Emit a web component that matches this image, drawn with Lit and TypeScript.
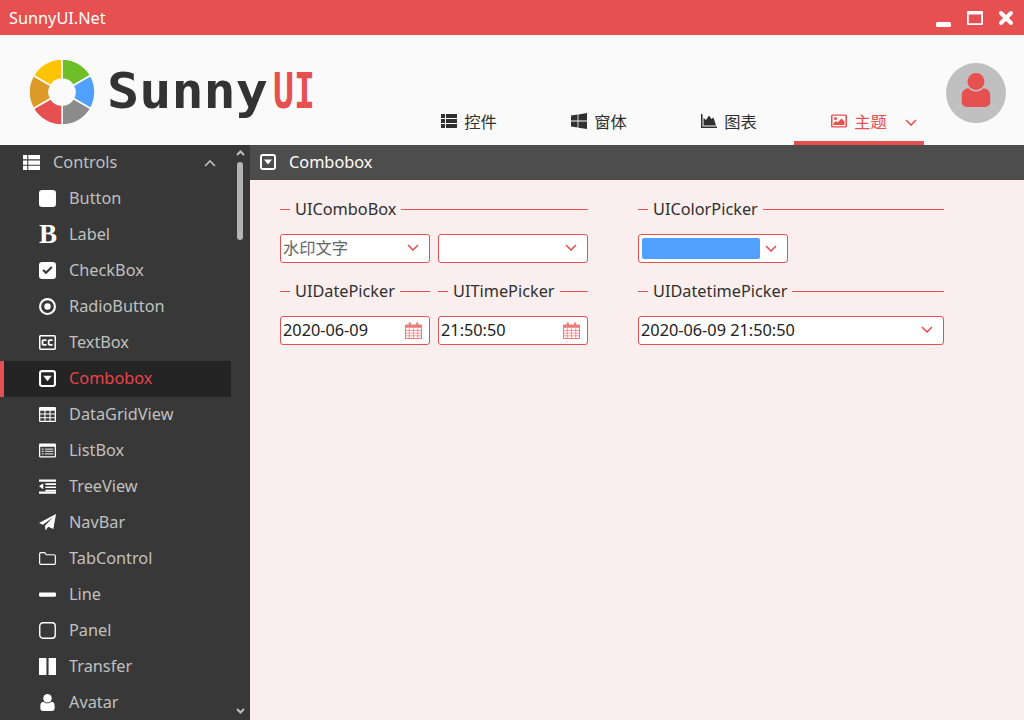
import { LitElement, html, css, svg } from 'lit';
import { customElement, state } from 'lit/decorators.js';

// icons, all on a 16x16 box, painted with currentColor
const icons: Record<string, unknown> = {
  list: svg`<path d="M0 1h4v4H0zM5 1h11v4H5zM0 6h4v4H0zM5 6h11v4H5zM0 11h4v4H0zM5 11h11v4H5z"/>`,
  square: svg`<rect x="0" y="0" width="16" height="16" rx="3"/>`,
  check: svg`<path fill-rule="evenodd" d="M3 0h10a3 3 0 0 1 3 3v10a3 3 0 0 1-3 3H3a3 3 0 0 1-3-3V3a3 3 0 0 1 3-3zM3.200 8.200l3.400 3.400 6.200-6.200-1.400-1.400-4.800 4.800-2-2z"/>`,
  radio: svg`<path fill-rule="evenodd" d="M8 0a8 8 0 1 1 0 16A8 8 0 0 1 8 0zm0 2a6 6 0 1 0 0 12A6 6 0 0 0 8 2z"/><circle cx="8" cy="8" r="3"/>`,
  cc: svg`<rect x=".7" y="1.700" width="14.600" height="12.600" rx=".8" fill="none" stroke="currentColor" stroke-width="1.400"/><path d="M7 5.800H4.200L3.300 6.600V9.400L4.200 10.200H7M12.800 5.800H10L9.100 6.600V9.400L10 10.200H12.800" fill="none" stroke="currentColor" stroke-width="1.700"/>`,
  combo: svg`<path fill-rule="evenodd" d="M3 0h10a3 3 0 0 1 3 3v10a3 3 0 0 1-3 3H3a3 3 0 0 1-3-3V3a3 3 0 0 1 3-3zm-.2 2a.8.8 0 0 0-.8.8v10.400a.8.800 0 0 0 .8.800h10.400a.8.800 0 0 0 .8-.8V2.800a.8.800 0 0 0-.8-.8z"/><path d="M4 5.500h8L8 10.500z"/>`,
  grid: svg`<path fill-rule="evenodd" d="M1 1h14a1 1 0 0 1 1 1v12a1 1 0 0 1-1 1H1a1 1 0 0 1-1-1V2a1 1 0 0 1 1-1zm.2 3.500v2.600h3.900V4.500zm4.900 0v2.600h3.800V4.500zm4.800 0v2.600h3.900V4.500zM1.200 8.100v2.500h3.900V8.100zm4.900 0v2.500h3.800V8.100zm4.800 0v2.500h3.900V8.100zM1.200 11.600v2.200h3.900v-2.200zm4.900 0v2.200h3.800v-2.200zm4.800 0v2.200h3.900v-2.200z"/>`,
  listbox: svg`<path fill-rule="evenodd" d="M1 1.500h14a1 1 0 0 1 1 1v11a1 1 0 0 1-1 1H1a1 1 0 0 1-1-1v-11a1 1 0 0 1 1-1zm.2 3v8.800h13.600V4.500z"/><path d="M2.500 6h2v1.200h-2zM5.500 6h8v1.200h-8zM2.500 8.300h2v1.200h-2zM5.500 8.300h8v1.200h-8zM2.500 10.600h2v1.200h-2zM5.500 10.600h8v1.200h-8z" opacity=".75"/>`,
  tree: svg`<path d="M0 1.500h16v2H0zM6 5h10v1.500H6zM6 8h10v1.500H6zM6 11h10v1.500H6zM0 12.800h16v2H0zM4 5v5.500L0 7.800z"/>`,
  plane: svg`<path d="M16 0 13.500 14 8.700 12 6.200 15.500 5.600 11.300 13 3 3.800 10 0 8.500z"/>`,
  folder: svg`<path fill="none" stroke="currentColor" stroke-width="1.100" d="M1.800 2.500h3.600l1.500 2h7.300a1.200 1.200 0 0 1 1.200 1.200v6.600a1.200 1.200 0 0 1-1.200 1.200H1.800a1.200 1.200 0 0 1-1.200-1.200V3.700a1.200 1.200 0 0 1 1.200-1.200z"/>`,
  line: svg`<rect x="0" y="6" width="16" height="4" rx="1"/>`,
  panel: svg`<rect x="0.700" y="0.700" width="14.600" height="14.600" rx="3" fill="none" stroke="currentColor" stroke-width="1.300"/>`,
  transfer: svg`<path d="M0 0h7v16H0zM9 0h7v16H9z"/>`,
  user: svg`<circle cx="8" cy="4" r="4"/><path d="M4.500 7.200C5.500 8.200 6.700 8.700 8 8.700s2.500-.5 3.500-1.500c1.800 0 3.200 1.400 3.200 3.300v3.200c0 1.300-1 2.300-2.300 2.300H3.600c-1.300 0-2.300-1-2.300-2.300v-3.200c0-1.900 1.400-3.300 3.200-3.300z"/>`,
  windows: svg`<path d="M0 2.400 6.600 1.500V7.600H0zM7.400 1.400 16 0V7.600H7.400zM0 8.400H6.600V14.500L0 13.600zM7.400 8.400H16V16L7.400 14.700z"/>`,
  area: svg`<path d="M0 1h1.500v12.500H16V15H0z"/><path d="M2.500 12.500V5L5 7 8 2.500 10.500 6 12.500 4.500 15 12.500z"/>`,
  image: svg`<path fill-rule="evenodd" d="M1.500 1.500h13A1.500 1.500 0 0 1 16 3v10a1.500 1.500 0 0 1-1.500 1.500h-13A1.500 1.500 0 0 1 0 13V3a1.500 1.500 0 0 1 1.500-1.500zm0 1.300V13.200h13V2.800z"/><circle cx="4.500" cy="5.500" r="1.500"/><path d="M2.500 12v-1.800L5 8l1.500 1.500L10.500 5.500 13.500 8.500V12z"/>`,
};

const chevron = (up = false) => html`<svg class="chev" viewBox="0 0 12 7"><path d=${up ? 'M1 6 6 1 11 6' : 'M1 1 6 6 11 1'} /></svg>`;

const icon = (name: string) => html`<svg class="ico" viewBox="0 0 16 16">${icons[name]}</svg>`;

const calendar = html`<svg class="cal" viewBox="0 0 16 16">
  <path d="M.5 3h15v12.500H.5z" fill="none" stroke="currentColor" stroke-width="1" />
  <path d="M.5 2.500h15v3H.5zM3.500 .5h2v3.500h-2zM10.500 .5h2v3.500h-2z" />
  <path d="M.5 8h15M.5 10.500h15M.5 13h15M4 5.500v10M8 5.500v10M12 5.500v10" fill="none" stroke="currentColor" stroke-width=".7" />
</svg>`;

// six colour wheel segments of the logo, clockwise from 12 o'clock
const wheelColors = ['#6ebe28', '#50a0ff', '#8c8c8c', '#e65050', '#dc9b28', '#ffc300'];

function segment(i: number) {
  const R = 33;
  const r = 13;
  const a0 = ((i * 60 - 90) * Math.PI) / 180;
  const a1 = (((i + 1) * 60 - 90) * Math.PI) / 180;
  const p = (rad: number, a: number) => `${(33 + rad * Math.cos(a)).toFixed(2)} ${(33 + rad * Math.sin(a)).toFixed(2)}`;
  return `M${p(r, a0)}L${p(R, a0)}A${R} ${R} 0 0 1 ${p(R, a1)}L${p(r, a1)}A${r} ${r} 0 0 0 ${p(r, a0)}Z`;
}

const menu = [
  ['square', 'Button'],
  ['', 'Label'],
  ['check', 'CheckBox'],
  ['radio', 'RadioButton'],
  ['cc', 'TextBox'],
  ['combo', 'Combobox'],
  ['grid', 'DataGridView'],
  ['listbox', 'ListBox'],
  ['tree', 'TreeView'],
  ['plane', 'NavBar'],
  ['folder', 'TabControl'],
  ['line', 'Line'],
  ['panel', 'Panel'],
  ['transfer', 'Transfer'],
  ['user', 'Avatar'],
];

const tabs = [
  ['list', '控件'],
  ['windows', '窗体'],
  ['area', '图表'],
  ['image', '主题'],
];

@customElement('app-root')
export class AppRoot extends LitElement {
  @state() private activeTab = '主题';
  @state() private activeItem = 'Combobox';

  static styles = css`
    :host {
      display: block;
      width: 1024px;
      height: 720px;
      overflow: hidden;
      font-family: 'Noto Sans', 'Noto Sans CJK SC', sans-serif;
      font-size: 16.3px;
      color: #303030;
      --red: #e65050;
    }
    svg.ico {
      width: 16px;
      height: 16px;
      fill: currentColor;
      flex: none;
    }
    svg.chev {
      width: 12px;
      height: 7px;
      fill: none;
      stroke: var(--red);
      stroke-width: 1.6;
      flex: none;
    }
    .title {
      height: 35px;
      background: var(--red);
      color: #fff;
      display: flex;
      align-items: center;
      justify-content: space-between;
      padding: 0 10px 0 9px;
    }
    .win {
      display: flex;
      align-items: center;
      gap: 15px;
    }
    .win svg {
      width: 16px;
      height: 16px;
      display: block;
    }
    .win .min {
      margin-top: 4px;
    }
    .head {
      height: 110px;
      background: #fafafa;
      display: flex;
    }
    .logo {
      margin: 24px 0 0 29px;
      width: 320px;
      height: 66px;
      display: flex;
    }
    .logo text {
      font-family: 'DejaVu Sans Mono', monospace;
      font-weight: 700;
      font-size: 50px;
    }
    .tabs {
      display: flex;
      margin-left: 55px;
      align-self: flex-end;
    }
    .tab {
      width: 130px;
      height: 44px;
      box-sizing: border-box;
      display: flex;
      align-items: center;
      justify-content: center;
      gap: 7px;
      padding-bottom: 5px;
      position: relative;
    }
    .tab.on {
      color: var(--red);
      border-bottom: 4px solid var(--red);
      padding-bottom: 1px;
    }
    .tab .chev {
      position: absolute;
      right: 7px;
      top: 18px;
    }
    .avatar {
      width: 60px;
      height: 60px;
      border-radius: 50%;
      background: #c0c0c0;
      margin: 28px 0 0 22px;
      padding-bottom: 7px;
      box-sizing: border-box;
      display: flex;
      align-items: center;
      justify-content: center;
      color: var(--red);
    }
    .avatar svg.ico {
      width: 34px;
      height: 34px;
    }
    .body {
      display: flex;
      height: 575px;
    }
    .side {
      width: 250px;
      background: #383838;
      display: flex;
      flex: none;
      overflow: hidden;
    }
    .list {
      width: 231px;
      flex: none;
    }
    .row {
      height: 36px;
      display: flex;
      align-items: center;
      color: #c0c0c0;
      padding: 0 0 2px 39px;
      gap: 13px;
      box-sizing: border-box;
    }
    .row svg.ico {
      width: 17px;
      height: 17px;
      color: #fff;
    }
    .row.head-row {
      padding-left: 23px;
      position: relative;
    }
    .row.head-row svg.chev {
      position: absolute;
      left: 204px;
      top: 15px;
      stroke: #c0c0c0;
    }
    .row.on {
      background: #242424;
      color: #e8424a;
      border-left: 4px solid var(--red);
      padding-left: 35px;
    }
    .row .b {
      width: 17px;
      height: 17px;
      flex: none;
      color: #fff;
      font: 700 27px/17px 'Liberation Serif', serif;
      text-align: center;
    }
    .scroll {
      flex: 1;
      display: flex;
      flex-direction: column;
      align-items: center;
      justify-content: space-between;
      padding: 5px 0 6px;
      position: relative;
    }
    .scroll svg {
      width: 9px;
      height: 6px;
      fill: none;
      stroke: #c0c0c0;
      stroke-width: 2;
    }
    .thumb {
      position: absolute;
      top: 17px;
      left: 6px;
      width: 6px;
      height: 78px;
      border-radius: 3px;
      background: #b4b4b4;
    }
    .main {
      flex: 1;
      background: #faeeee;
    }
    .bar {
      height: 35px;
      background: #4d4d4d;
      color: #fff;
      display: flex;
      align-items: center;
      padding: 0 0 2px 10px;
      box-sizing: border-box;
      gap: 13px;
    }
    .form {
      display: flex;
      gap: 50px;
      padding: 19px 0 0 30px;
    }
    .col {
      width: 308px;
      display: grid;
      grid-template-columns: 150px 150px;
      gap: 18px 8px;
      align-content: start;
    }
    .col.wide {
      width: 306px;
      grid-template-columns: 306px;
    }
    .box {
      display: flex;
      flex-direction: column;
      gap: 15px;
    }
    .span {
      grid-column: 1 / -1;
    }
    .legend {
      height: 20px;
      display: flex;
      align-items: center;
      gap: 5px;
    }
    .legend::before,
    .legend::after {
      content: '';
      height: 1px;
      background: var(--red);
    }
    .legend::before {
      width: 10px;
    }
    .legend::after {
      flex: 1;
    }
    .pair {
      display: flex;
      gap: 8px;
    }
    .field {
      height: 29px;
      box-sizing: border-box;
      border: 1px solid var(--red);
      border-radius: 3px;
      background: #fff;
      display: flex;
      align-items: center;
      justify-content: space-between;
      padding: 0 10px 2px 2px;
      flex: none;
      color: #222;
    }
    .pair .field {
      width: 150px;
    }
    .field.hint {
      color: #666;
    }
    .field.hint span {
      margin-top: -2px;
    }
    .field.date {
      padding: 0 7px 1px 2px;
    }
    .field.pick {
      padding: 0 10px 0 2px;
    }
    .cal {
      width: 17px;
      height: 17px;
      fill: #ee7a7a;
      color: #ee7a7a;
    }
    .swatch {
      width: 118px;
      height: 21px;
      background: #50a0ff;
      border-radius: 2px;
      margin-left: 1px;
    }
  `;

  private renderLegend(text: string) {
    return html`<div class="legend">${text}</div>`;
  }

  render() {
    return html`
      <div class="title">
        <span>SunnyUI.Net</span>
        <div class="win">
          <svg class="min" viewBox="0 0 16 16"><rect x="0" y="10" width="15" height="5" rx="1.500" fill="#fff" /></svg>
          <svg viewBox="0 0 18 16"><path fill="#fff" fill-rule="evenodd" d="M1.500 0h15A1.500 1.500 0 0 1 18 1.500v13a1.500 1.500 0 0 1-1.500 1.500h-15A1.500 1.500 0 0 1 0 14.500v-13A1.500 1.500 0 0 1 1.500 0zM2 4v10h14V4z" /></svg>
          <svg viewBox="0 0 16 16"><path d="M3 3l10 10M13 3 3 13" stroke="#fff" stroke-width="4" stroke-linecap="round" fill="none" /></svg>
        </div>
      </div>
      <div class="head">
        <div class="logo">
          <svg width="320" height="66" viewBox="0 0 320 66">
            <g stroke="#fafafa" stroke-width="1.500">
              ${wheelColors.map((c, i) => svg`<path d=${segment(i)} fill=${c} />`)}
            </g>
            <text x="78" y="49" fill="#333" textLength="161" lengthAdjust="spacingAndGlyphs">Sunny</text>
            <text x="244" y="49" fill="#e65050" textLength="42" lengthAdjust="spacingAndGlyphs">UI</text>
          </svg>
        </div>
        <div class="tabs">
          ${tabs.map(([ic, label]) => html`
            <div class="tab ${label === this.activeTab ? 'on' : ''}">
              ${icon(ic)}<span>${label}</span>
              ${label === this.activeTab ? chevron() : ''}
            </div>
          `)}
        </div>
        <div class="avatar">${icon('user')}</div>
      </div>
      <div class="body">
        <div class="side">
          <div class="list">
            <div class="row head-row">${icon('list')}<span>Controls</span>${chevron(true)}</div>
            ${menu.map(([ic, label]) => html`
              <div class="row ${label === this.activeItem ? 'on' : ''}">
                ${ic ? icon(ic) : html`<span class="b">B</span>`}<span>${label}</span>
              </div>
            `)}
          </div>
          <div class="scroll">
            <svg viewBox="0 0 9 6"><path d="M1 5 4.500 1.500 8 5" /></svg>
            <div class="thumb"></div>
            <svg viewBox="0 0 9 6"><path d="M1 1 4.500 4.500 8 1" /></svg>
          </div>
        </div>
        <div class="main">
          <div class="bar">${icon('combo')}<span>Combobox</span></div>
          <div class="form">
            <div class="col">
              <div class="box span">
                ${this.renderLegend('UIComboBox')}
                <div class="pair">
                  <div class="field hint"><span>水印文字</span>${chevron()}</div>
                  <div class="field"><span></span>${chevron()}</div>
                </div>
              </div>
              <div class="box">
                ${this.renderLegend('UIDatePicker')}
                <div class="field date"><span>2020-06-09</span>${calendar}</div>
              </div>
              <div class="box">
                ${this.renderLegend('UITimePicker')}
                <div class="field date"><span>21:50:50</span>${calendar}</div>
              </div>
            </div>
            <div class="col wide">
              <div class="box">
                ${this.renderLegend('UIColorPicker')}
                <div class="pair">
                  <div class="field pick"><div class="swatch"></div>${chevron()}</div>
                </div>
              </div>
              <div class="box">
                ${this.renderLegend('UIDatetimePicker')}
                <div class="field"><span>2020-06-09 21:50:50</span>${chevron()}</div>
              </div>
            </div>
          </div>
        </div>
      </div>
    `;
  }
}
